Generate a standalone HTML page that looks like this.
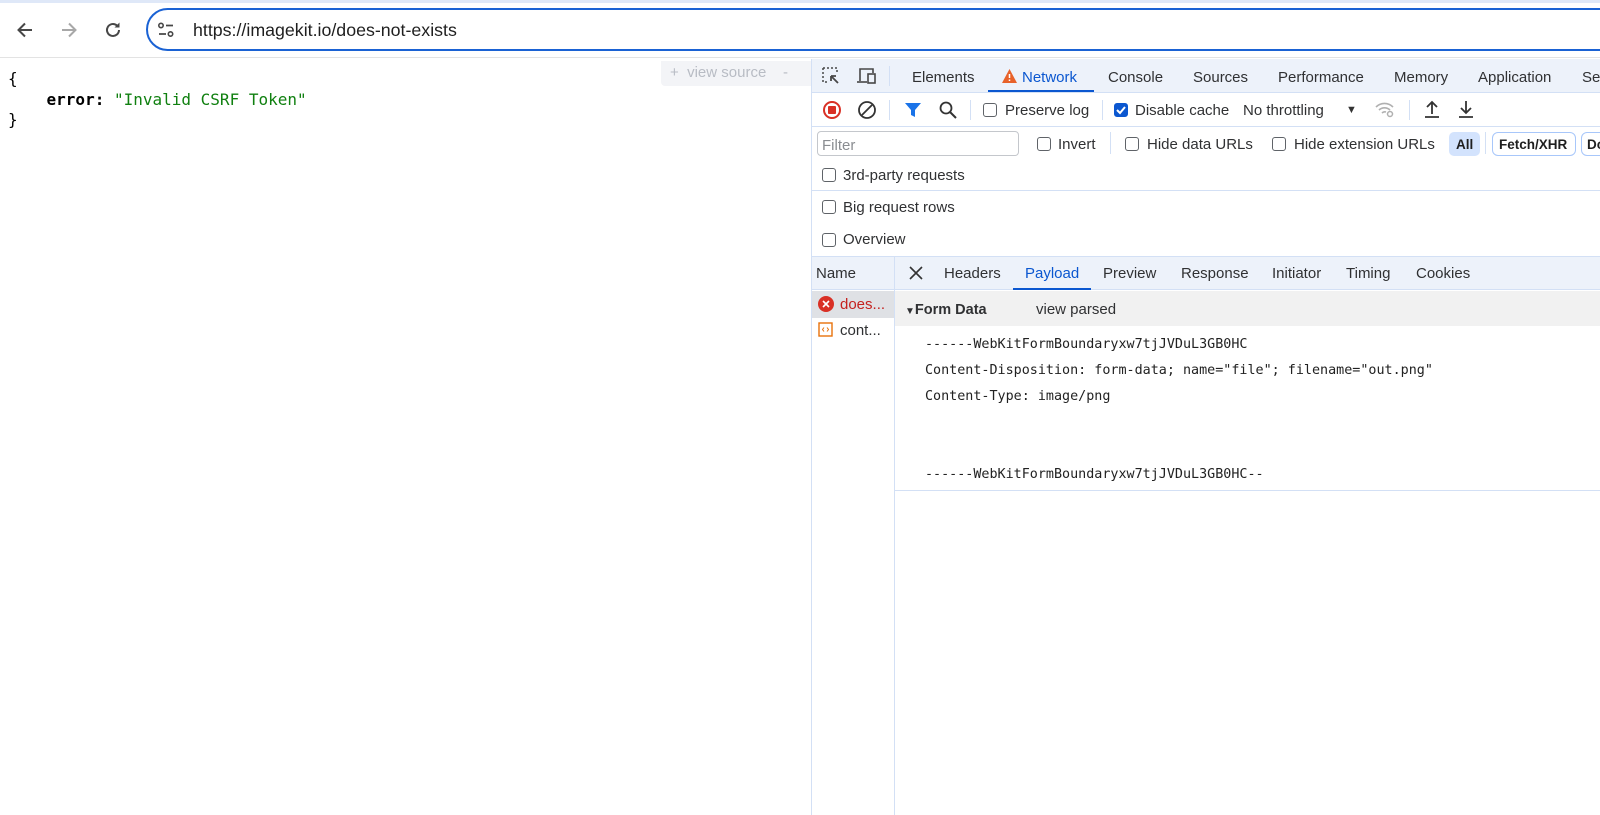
<!DOCTYPE html>
<html><head><meta charset="utf-8"><style>
*{margin:0;padding:0;box-sizing:border-box}
body{width:1600px;height:815px;overflow:hidden;background:#fff;font-family:"Liberation Sans",Arial,sans-serif;color:#1f1f1f;position:relative}
.a{position:absolute;white-space:nowrap}
.t{font-size:15px;color:#303133;line-height:1}
.mono{font-family:"DejaVu Sans Mono","Liberation Mono",monospace}
.cb{position:absolute;width:14px;height:14px;border:1.5px solid #5f6368;border-radius:3px;background:#fff}
.hl{position:absolute;background:#d3e0f5;height:1px}
.vl{position:absolute;background:#d3e0f5;width:1px}
</style></head><body>
<div class="a" style="left:0;top:0;width:1600px;height:3px;background:#dfe8f8"></div>
<div class="a" style="left:0;top:57px;width:1600px;height:1px;background:#e3e3e3"></div>
<svg class="a" style="left:14px;top:19px" width="22" height="22" viewBox="0 0 22 22"><path d="M18 11H5M11 4.5L4.5 11 11 17.5" stroke="#474747" stroke-width="2" fill="none"/></svg>
<svg class="a" style="left:58px;top:19px" width="22" height="22" viewBox="0 0 22 22"><path d="M4 11H17M11 4.5L17.5 11 11 17.5" stroke="#a8a8a8" stroke-width="2" fill="none"/></svg>
<svg class="a" style="left:102px;top:19px" width="22" height="22" viewBox="0 0 22 22"><path d="M17 11A6 6 0 1 1 15 6.5" stroke="#474747" stroke-width="2" fill="none"/><path d="M17.5 3.5V8.5H12.5Z" fill="#474747"/></svg>
<div class="a" style="left:146px;top:8px;width:1500px;height:43px;border:2.5px solid #1a62d4;border-radius:22px"></div>
<svg class="a" style="left:156px;top:20px" width="20" height="20" viewBox="0 0 20 20"><circle cx="5" cy="5.5" r="2.2" stroke="#474747" stroke-width="1.6" fill="none"/><path d="M10 5.5H17M3 14H10" stroke="#474747" stroke-width="1.8"/><circle cx="14.5" cy="14" r="2.2" stroke="#474747" stroke-width="1.6" fill="none"/></svg>
<div class="a" style="left:193px;top:20px;font-size:17.8px;color:#1f1f1f">https://imagekit.io/does-not-exists</div>
<div class="a mono" style="left:8px;top:69px;font-size:16px;line-height:20.5px;color:#000">{<br>&nbsp;&nbsp;&nbsp;&nbsp;<b>error:</b> <span style="color:#108010">"Invalid CSRF Token"</span><br>}</div>
<div class="a" style="left:661px;top:61px;width:150px;height:25px;background:#f3f4f7;border-radius:0 0 0 4px;color:#b8bcc4;font-size:15px;padding:3px 0 0 9px">+&nbsp; view source&nbsp;&nbsp;&nbsp; -</div>
<div class="vl" style="left:811px;top:59px;height:756px"></div>
<div class="a" style="left:812px;top:59px;width:788px;height:34px;background:#edf2fa;border-bottom:1px solid #d3e0f5"></div>
<svg class="a" style="left:821px;top:66px" width="20" height="20" viewBox="0 0 20 20"><path d="M2 2h14v6" stroke="#474747" stroke-width="1.5" stroke-dasharray="2 2" fill="none"/><path d="M2 2v14h6" stroke="#474747" stroke-width="1.5" stroke-dasharray="2 2" fill="none"/><path d="M10 10l7 7M10 10v5M10 10h5" stroke="#474747" stroke-width="1.8" fill="none"/></svg>
<svg class="a" style="left:856px;top:66px" width="22" height="20" viewBox="0 0 22 20"><path d="M4 15V3h13v4" stroke="#474747" stroke-width="1.6" fill="none"/><path d="M1 16h10" stroke="#474747" stroke-width="1.6"/><rect x="12" y="8" width="7" height="9" stroke="#474747" stroke-width="1.6" fill="none"/></svg>
<div class="vl" style="left:889px;top:66px;height:20px"></div>
<div class="a t" style="left:912px;top:70px">Elements</div>
<svg class="a" style="left:1002px;top:69px" width="15" height="14" viewBox="0 0 15 14"><path d="M7.5 0L15 14H0Z" fill="#e8622a"/><path d="M7.5 5v4M7.5 10.5v1.5" stroke="#fff" stroke-width="1.5"/></svg>
<div class="a t" style="left:1022px;top:70px;color:#0b57d0">Network</div>
<div class="a" style="left:988px;top:90px;width:106px;height:2px;background:#0b57d0"></div>
<div class="a t" style="left:1108px;top:70px">Console</div>
<div class="a t" style="left:1193px;top:70px">Sources</div>
<div class="a t" style="left:1278px;top:70px">Performance</div>
<div class="a t" style="left:1394px;top:70px">Memory</div>
<div class="a t" style="left:1478px;top:70px">Application</div>
<div class="a t" style="left:1582px;top:70px">Se</div>
<div class="hl" style="left:812px;top:126px;width:788px"></div>
<svg class="a" style="left:822px;top:100px" width="20" height="20"><circle cx="10" cy="10" r="8" stroke="#d93025" stroke-width="2" fill="none"/><rect x="6" y="6" width="8" height="8" rx="1" fill="#d93025"/></svg>
<svg class="a" style="left:857px;top:100px" width="20" height="20"><circle cx="10" cy="10" r="8" stroke="#333" stroke-width="1.8" fill="none"/><path d="M5 15L15 5" stroke="#333" stroke-width="1.8"/></svg>
<div class="vl" style="left:889px;top:100px;height:20px"></div>
<svg class="a" style="left:904px;top:101px" width="18" height="18"><path d="M1 2h16l-6 7v7l-4-2V9Z" fill="#1a73e8"/></svg>
<svg class="a" style="left:938px;top:100px" width="20" height="20"><circle cx="8" cy="8" r="5.5" stroke="#333" stroke-width="1.8" fill="none"/><path d="M12 12l6 6" stroke="#333" stroke-width="2"/></svg>
<div class="vl" style="left:970px;top:100px;height:20px"></div>
<div class="cb" style="left:983px;top:103px"></div>
<div class="a t" style="left:1005px;top:103px">Preserve log</div>
<div class="vl" style="left:1102px;top:100px;height:20px"></div>
<div class="cb" style="left:1114px;top:103px;background:#0b57d0;border-color:#0b57d0"></div>
<svg class="a" style="left:1114px;top:103px" width="14" height="14"><path d="M3 7l3 3 5-6" stroke="#fff" stroke-width="2" fill="none"/></svg>
<div class="a t" style="left:1135px;top:103px">Disable cache</div>
<div class="a t" style="left:1243px;top:103px">No throttling</div>
<div class="a" style="left:1346px;top:104px;font-size:11px;color:#333">▼</div>
<svg class="a" style="left:1374px;top:99px" width="22" height="20"><path d="M2 8a12 12 0 0 1 17 0M5 11a8 8 0 0 1 11 0M8 14a4 4 0 0 1 4-1" stroke="#b0b0b0" stroke-width="1.6" fill="none"/><circle cx="16" cy="15" r="2.5" stroke="#b0b0b0" stroke-width="1.5" fill="none"/></svg>
<div class="vl" style="left:1409px;top:100px;height:20px"></div>
<svg class="a" style="left:1423px;top:99px" width="18" height="20"><path d="M9 15V3M4 8l5-5 5 5M2 18h14" stroke="#333" stroke-width="1.8" fill="none"/></svg>
<svg class="a" style="left:1457px;top:99px" width="18" height="20"><path d="M9 2v12M4 9l5 5 5-5M2 18h14" stroke="#333" stroke-width="1.8" fill="none"/></svg>
<div class="a" style="left:817px;top:131px;width:202px;height:25px;border:1px solid #c4c7cc;border-radius:4px;font-size:15px;color:#8a8d91;padding:5px 0 0 4px">Filter</div>
<div class="cb" style="left:1037px;top:137px"></div>
<div class="a t" style="left:1058px;top:137px">Invert</div>
<div class="vl" style="left:1110px;top:132px;height:22px"></div>
<div class="cb" style="left:1125px;top:137px"></div>
<div class="a t" style="left:1147px;top:137px">Hide data URLs</div>
<div class="cb" style="left:1272px;top:137px"></div>
<div class="a t" style="left:1294px;top:137px">Hide extension URLs</div>
<div class="a" style="left:1449px;top:132px;width:31px;height:24px;background:#d3e3fd;border-radius:5px;font-size:13.5px;font-weight:bold;color:#1f1f1f;padding:5px 0 0 7px">All</div>
<div class="vl" style="left:1485px;top:132px;height:22px"></div>
<div class="a" style="left:1492px;top:132px;width:84px;height:24px;border:1px solid #a8c7fa;border-radius:6px;font-size:13.5px;font-weight:bold;padding:4px 0 0 6px">Fetch/XHR</div>
<div class="a" style="left:1581px;top:132px;width:40px;height:24px;border:1px solid #a8c7fa;border-radius:6px;font-size:13.5px;font-weight:bold;padding:4px 0 0 5px">Do</div>
<div class="cb" style="left:822px;top:168px"></div>
<div class="a t" style="left:843px;top:168px">3rd-party requests</div>
<div class="hl" style="left:812px;top:190px;width:788px"></div>
<div class="cb" style="left:822px;top:200px"></div>
<div class="a t" style="left:843px;top:200px">Big request rows</div>
<div class="cb" style="left:822px;top:233px"></div>
<div class="a t" style="left:843px;top:232px">Overview</div>
<div class="hl" style="left:812px;top:256px;width:788px"></div>
<div class="a" style="left:812px;top:257px;width:82px;height:33px;background:#edf2fa;border-bottom:1px solid #d3e0f5"></div>
<div class="a t" style="left:816px;top:266px">Name</div>
<div class="vl" style="left:894px;top:257px;height:558px"></div>
<div class="a" style="left:895px;top:257px;width:705px;height:33px;background:#edf2fa;border-bottom:1px solid #d3e0f5"></div>
<svg class="a" style="left:908px;top:265px" width="16" height="16"><path d="M2 2l12 12M14 2L2 14" stroke="#333" stroke-width="1.6"/></svg>
<div class="a t" style="left:944px;top:266px">Headers</div>
<div class="a t" style="left:1025px;top:266px;color:#0b57d0">Payload</div>
<div class="a" style="left:1013px;top:288px;width:78px;height:2px;background:#0b57d0"></div>
<div class="a t" style="left:1103px;top:266px">Preview</div>
<div class="a t" style="left:1181px;top:266px">Response</div>
<div class="a t" style="left:1272px;top:266px">Initiator</div>
<div class="a t" style="left:1346px;top:266px">Timing</div>
<div class="a t" style="left:1416px;top:266px">Cookies</div>
<div class="a" style="left:812px;top:291px;width:82px;height:27px;background:#dfe1e5"></div>
<svg class="a" style="left:818px;top:296px" width="16" height="16"><circle cx="8" cy="8" r="8" fill="#d93025"/><path d="M5 5l6 6M11 5l-6 6" stroke="#fff" stroke-width="1.6"/></svg>
<div class="a t" style="left:840px;top:297px;color:#c5221f">does...</div>
<svg class="a" style="left:818px;top:322px" width="16" height="16"><rect x="1" y="1" width="13" height="13" stroke="#e8710a" stroke-width="1.4" fill="none"/><path d="M6 5.5L4.5 7.5 6 9.5M9 5.5l1.5 2L9 9.5" stroke="#e8710a" stroke-width="1" fill="none"/></svg>
<div class="a t" style="left:840px;top:323px">cont...</div>
<div class="a" style="left:895px;top:291px;width:705px;height:35px;background:#f1f1f1"></div>
<div class="a" style="left:905px;top:302px;font-size:14.5px;font-weight:bold;color:#303133"><span style="font-size:10px">▼</span>Form Data</div>
<div class="a t" style="left:1036px;top:302px">view parsed</div>
<div class="a mono" style="left:925px;top:332px;font-size:13.4px;color:#222;line-height:26px">------WebKitFormBoundaryxw7tjJVDuL3GB0HC<br>Content-Disposition: form-data; name="file"; filename="out.png"<br>Content-Type: image/png<br><br><br>------WebKitFormBoundaryxw7tjJVDuL3GB0HC--</div>
<div class="hl" style="left:895px;top:490px;width:705px"></div>
</body></html>
